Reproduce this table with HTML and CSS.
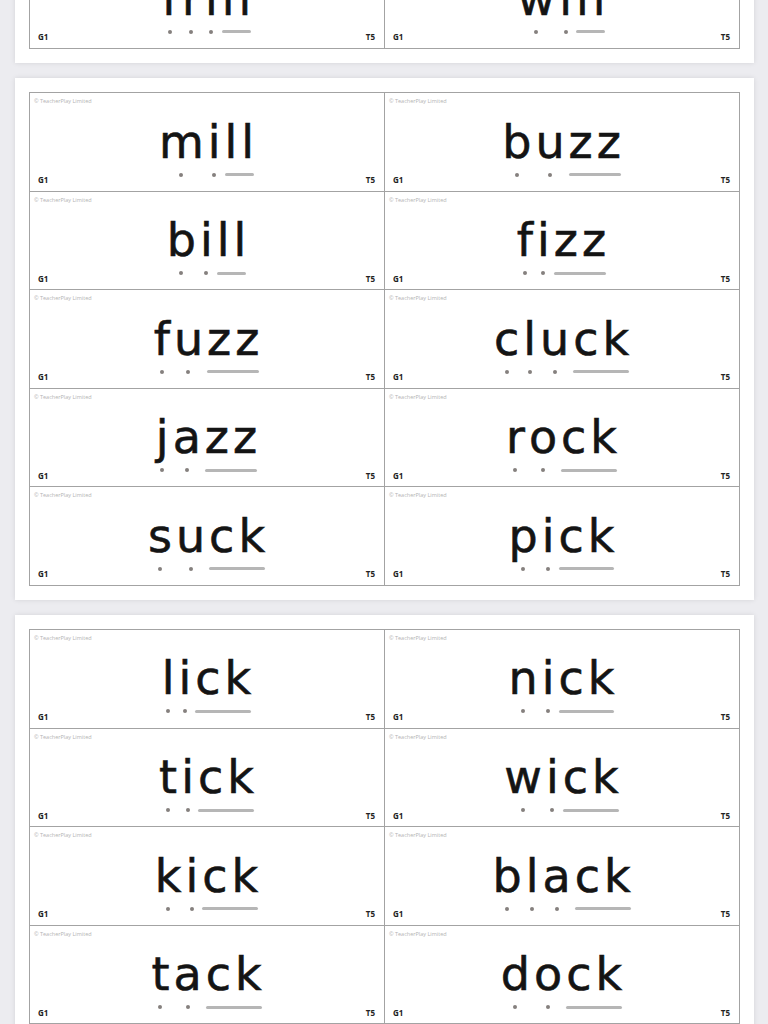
FILE: index.html
```html
<!DOCTYPE html>
<html lang="en">
<head>
<meta charset="utf-8">
<title>Word cards</title>
<link rel="stylesheet" href="styles.css">
</head>
<body>
<main class="viewer">
  <section class="page page-first">
    <div class="cards">
      <div class="card">
        <div class="copy">© TeacherPlay Limited</div>
        <div class="lvl">G1</div>
        <div class="word">
          <div class="g"><span class="t">f</span><span class="m"><i class="dot"></i></span></div>
          <div class="g"><span class="t">r</span><span class="m"><i class="dot"></i></span></div>
          <div class="g"><span class="t">i</span><span class="m"><i class="dot"></i></span></div>
          <div class="g"><span class="t">ll</span><span class="m"><i class="line"></i></span></div>
        </div>
        <div class="set">T5</div>
      </div>
      <div class="card">
        <div class="copy">© TeacherPlay Limited</div>
        <div class="lvl">G1</div>
        <div class="word">
          <div class="g"><span class="t">w</span><span class="m"><i class="dot"></i></span></div>
          <div class="g"><span class="t">i</span><span class="m"><i class="dot"></i></span></div>
          <div class="g"><span class="t">ll</span><span class="m"><i class="line"></i></span></div>
        </div>
        <div class="set">T5</div>
      </div>
    </div>
  </section>

  <section class="page">
    <div class="cards">
      <div class="card">
        <div class="copy">© TeacherPlay Limited</div>
        <div class="lvl">G1</div>
        <div class="word">
          <div class="g"><span class="t">m</span><span class="m"><i class="dot"></i></span></div>
          <div class="g"><span class="t">i</span><span class="m"><i class="dot"></i></span></div>
          <div class="g"><span class="t">ll</span><span class="m"><i class="line"></i></span></div>
        </div>
        <div class="set">T5</div>
      </div>
      <div class="card">
        <div class="copy">© TeacherPlay Limited</div>
        <div class="lvl">G1</div>
        <div class="word">
          <div class="g"><span class="t">b</span><span class="m"><i class="dot"></i></span></div>
          <div class="g"><span class="t">u</span><span class="m"><i class="dot"></i></span></div>
          <div class="g"><span class="t">zz</span><span class="m"><i class="line"></i></span></div>
        </div>
        <div class="set">T5</div>
      </div>
      <div class="card">
        <div class="copy">© TeacherPlay Limited</div>
        <div class="lvl">G1</div>
        <div class="word">
          <div class="g"><span class="t">b</span><span class="m"><i class="dot"></i></span></div>
          <div class="g"><span class="t">i</span><span class="m"><i class="dot"></i></span></div>
          <div class="g"><span class="t">ll</span><span class="m"><i class="line"></i></span></div>
        </div>
        <div class="set">T5</div>
      </div>
      <div class="card">
        <div class="copy">© TeacherPlay Limited</div>
        <div class="lvl">G1</div>
        <div class="word">
          <div class="g"><span class="t">f</span><span class="m"><i class="dot"></i></span></div>
          <div class="g"><span class="t">i</span><span class="m"><i class="dot"></i></span></div>
          <div class="g"><span class="t">zz</span><span class="m"><i class="line"></i></span></div>
        </div>
        <div class="set">T5</div>
      </div>
      <div class="card">
        <div class="copy">© TeacherPlay Limited</div>
        <div class="lvl">G1</div>
        <div class="word">
          <div class="g"><span class="t">f</span><span class="m"><i class="dot"></i></span></div>
          <div class="g"><span class="t">u</span><span class="m"><i class="dot"></i></span></div>
          <div class="g"><span class="t">zz</span><span class="m"><i class="line"></i></span></div>
        </div>
        <div class="set">T5</div>
      </div>
      <div class="card">
        <div class="copy">© TeacherPlay Limited</div>
        <div class="lvl">G1</div>
        <div class="word">
          <div class="g"><span class="t">c</span><span class="m"><i class="dot"></i></span></div>
          <div class="g"><span class="t">l</span><span class="m"><i class="dot"></i></span></div>
          <div class="g"><span class="t">u</span><span class="m"><i class="dot"></i></span></div>
          <div class="g"><span class="t">ck</span><span class="m"><i class="line"></i></span></div>
        </div>
        <div class="set">T5</div>
      </div>
      <div class="card">
        <div class="copy">© TeacherPlay Limited</div>
        <div class="lvl">G1</div>
        <div class="word">
          <div class="g"><span class="t">j</span><span class="m"><i class="dot"></i></span></div>
          <div class="g"><span class="t">a</span><span class="m"><i class="dot"></i></span></div>
          <div class="g"><span class="t">zz</span><span class="m"><i class="line"></i></span></div>
        </div>
        <div class="set">T5</div>
      </div>
      <div class="card">
        <div class="copy">© TeacherPlay Limited</div>
        <div class="lvl">G1</div>
        <div class="word">
          <div class="g"><span class="t">r</span><span class="m"><i class="dot"></i></span></div>
          <div class="g"><span class="t">o</span><span class="m"><i class="dot"></i></span></div>
          <div class="g"><span class="t">ck</span><span class="m"><i class="line"></i></span></div>
        </div>
        <div class="set">T5</div>
      </div>
      <div class="card">
        <div class="copy">© TeacherPlay Limited</div>
        <div class="lvl">G1</div>
        <div class="word">
          <div class="g"><span class="t">s</span><span class="m"><i class="dot"></i></span></div>
          <div class="g"><span class="t">u</span><span class="m"><i class="dot"></i></span></div>
          <div class="g"><span class="t">ck</span><span class="m"><i class="line"></i></span></div>
        </div>
        <div class="set">T5</div>
      </div>
      <div class="card">
        <div class="copy">© TeacherPlay Limited</div>
        <div class="lvl">G1</div>
        <div class="word">
          <div class="g"><span class="t">p</span><span class="m"><i class="dot"></i></span></div>
          <div class="g"><span class="t">i</span><span class="m"><i class="dot"></i></span></div>
          <div class="g"><span class="t">ck</span><span class="m"><i class="line"></i></span></div>
        </div>
        <div class="set">T5</div>
      </div>
    </div>
  </section>

  <section class="page">
    <div class="cards">
      <div class="card">
        <div class="copy">© TeacherPlay Limited</div>
        <div class="lvl">G1</div>
        <div class="word">
          <div class="g"><span class="t">l</span><span class="m"><i class="dot"></i></span></div>
          <div class="g"><span class="t">i</span><span class="m"><i class="dot"></i></span></div>
          <div class="g"><span class="t">ck</span><span class="m"><i class="line"></i></span></div>
        </div>
        <div class="set">T5</div>
      </div>
      <div class="card">
        <div class="copy">© TeacherPlay Limited</div>
        <div class="lvl">G1</div>
        <div class="word">
          <div class="g"><span class="t">n</span><span class="m"><i class="dot"></i></span></div>
          <div class="g"><span class="t">i</span><span class="m"><i class="dot"></i></span></div>
          <div class="g"><span class="t">ck</span><span class="m"><i class="line"></i></span></div>
        </div>
        <div class="set">T5</div>
      </div>
      <div class="card">
        <div class="copy">© TeacherPlay Limited</div>
        <div class="lvl">G1</div>
        <div class="word">
          <div class="g"><span class="t">t</span><span class="m"><i class="dot"></i></span></div>
          <div class="g"><span class="t">i</span><span class="m"><i class="dot"></i></span></div>
          <div class="g"><span class="t">ck</span><span class="m"><i class="line"></i></span></div>
        </div>
        <div class="set">T5</div>
      </div>
      <div class="card">
        <div class="copy">© TeacherPlay Limited</div>
        <div class="lvl">G1</div>
        <div class="word">
          <div class="g"><span class="t">w</span><span class="m"><i class="dot"></i></span></div>
          <div class="g"><span class="t">i</span><span class="m"><i class="dot"></i></span></div>
          <div class="g"><span class="t">ck</span><span class="m"><i class="line"></i></span></div>
        </div>
        <div class="set">T5</div>
      </div>
      <div class="card">
        <div class="copy">© TeacherPlay Limited</div>
        <div class="lvl">G1</div>
        <div class="word">
          <div class="g"><span class="t">k</span><span class="m"><i class="dot"></i></span></div>
          <div class="g"><span class="t">i</span><span class="m"><i class="dot"></i></span></div>
          <div class="g"><span class="t">ck</span><span class="m"><i class="line"></i></span></div>
        </div>
        <div class="set">T5</div>
      </div>
      <div class="card">
        <div class="copy">© TeacherPlay Limited</div>
        <div class="lvl">G1</div>
        <div class="word">
          <div class="g"><span class="t">b</span><span class="m"><i class="dot"></i></span></div>
          <div class="g"><span class="t">l</span><span class="m"><i class="dot"></i></span></div>
          <div class="g"><span class="t">a</span><span class="m"><i class="dot"></i></span></div>
          <div class="g"><span class="t">ck</span><span class="m"><i class="line"></i></span></div>
        </div>
        <div class="set">T5</div>
      </div>
      <div class="card">
        <div class="copy">© TeacherPlay Limited</div>
        <div class="lvl">G1</div>
        <div class="word">
          <div class="g"><span class="t">t</span><span class="m"><i class="dot"></i></span></div>
          <div class="g"><span class="t">a</span><span class="m"><i class="dot"></i></span></div>
          <div class="g"><span class="t">ck</span><span class="m"><i class="line"></i></span></div>
        </div>
        <div class="set">T5</div>
      </div>
      <div class="card">
        <div class="copy">© TeacherPlay Limited</div>
        <div class="lvl">G1</div>
        <div class="word">
          <div class="g"><span class="t">d</span><span class="m"><i class="dot"></i></span></div>
          <div class="g"><span class="t">o</span><span class="m"><i class="dot"></i></span></div>
          <div class="g"><span class="t">ck</span><span class="m"><i class="line"></i></span></div>
        </div>
        <div class="set">T5</div>
      </div>
    </div>
  </section>
</main>
</body>
</html>
```

FILE: styles.css
```css
* { box-sizing: border-box; }

html, body {
  margin: 0;
  padding: 0;
}

body {
  background: #ececf0;
  font-family: "Open Sans", "Liberation Sans", sans-serif;
  color: #1a1a1a;
  overflow: hidden;
}

.viewer {
  display: flex;
  flex-direction: column;
  gap: 15px;
  padding-left: 15px;
}

.page {
  width: 739px;
  background: #ffffff;
  padding: 14px 14px 14px 14px;
  box-shadow: 0 0 5px rgba(0, 0, 0, 0.10);
}

.page-first {
  margin-top: -64.6px;
}

.cards {
  display: grid;
  grid-template-columns: 355px 355px;
  border-top: 1px solid #a3a3a3;
  border-left: 1px solid #a3a3a3;
}

.card {
  height: 98.6px;
  border-right: 1px solid #a3a3a3;
  border-bottom: 1px solid #a3a3a3;
  display: grid;
  grid-template-columns: 1fr auto 1fr;
  grid-template-rows: auto 1fr;
  padding: 0 9px 5.6px 8px;
}

.copy {
  grid-column: 1 / 4;
  grid-row: 1;
  margin: 4px 0 0 -4px;
  font-size: 5.5px;
  line-height: 8px;
  color: #b4b4b4;
  white-space: nowrap;
}

.lvl, .set {
  grid-row: 2;
  align-self: end;
  font-size: 8px;
  line-height: 10px;
  font-weight: 700;
  color: #222222;
}

.lvl { grid-column: 1; }

.set {
  grid-column: 3;
  justify-self: end;
}

.word {
  grid-column: 2;
  grid-row: 2;
  display: flex;
  gap: 4px;
  margin-top: 11.5px;
  align-self: start;
}

.g {
  display: flex;
  flex-direction: column;
  align-items: center;
}

.t {
  font-family: "DejaVu Sans", "Liberation Sans", sans-serif;
  font-size: 46px;
  line-height: 50px;
  letter-spacing: 4px;
  margin-right: -4px;
  color: #141414;
  -webkit-text-stroke: 0.6px #141414;
  white-space: nowrap;
}

.m {
  margin-top: 5px;
  height: 6px;
  width: 100%;
  display: flex;
  align-items: center;
  justify-content: center;
}

.dot {
  width: 4px;
  height: 4px;
  flex: none;
  border-radius: 50%;
  background: #85807e;
}

.line {
  width: 100%;
  height: 3px;
  border-radius: 2px;
  background: #b6b6b6;
}
```
